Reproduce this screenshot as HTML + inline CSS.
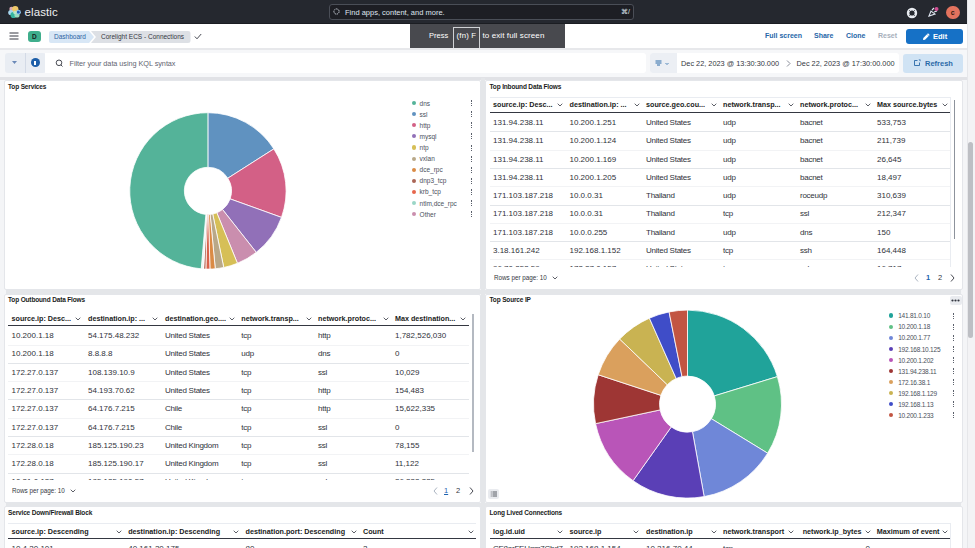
<!DOCTYPE html><html><head><meta charset="utf-8"><style>
*{margin:0;padding:0;box-sizing:border-box}
html,body{width:975px;height:548px;overflow:hidden;background:#f4f5f7;font-family:"Liberation Sans",sans-serif;color:#343741}
.a{position:absolute;white-space:nowrap}
#hdr{position:absolute;left:0;top:0;width:967px;height:24px;background:#25282f;border-bottom:1px solid #1b1d22}
#sb{position:absolute;left:966.5px;top:0;width:8.5px;height:548px;background:#f3f3f5;border-left:0.5px solid #e6e7ea}
#thumb{position:absolute;left:968.3px;top:142px;width:5px;height:195.5px;background:#bdbfc4;border-radius:2.5px}
#bc{position:absolute;left:0;top:24px;width:967px;height:24px;background:#fff}
#qb{position:absolute;left:0;top:47.5px;width:967px;height:32px;background:#f6f7f9;border-top:2px solid #e7e8eb;border-bottom:3px solid #e1e2e6}
.panel{position:absolute;background:#fff;border:1px solid #e4e6ea;border-radius:2px;overflow:hidden}
.gut{position:absolute;background:#e4e6e9}
.pt{position:absolute;left:4px;top:3px;font-size:6.5px;letter-spacing:-0.15px;font-weight:bold;color:#1a1c21}
.th{position:absolute;font-size:7.2px;font-weight:bold;color:#1a1c21}
.td{position:absolute;font-size:8px;color:#2f323a}
.leg{position:absolute;font-size:6.5px;color:#4a4f5a}
.dot{position:absolute;width:4.2px;height:4.2px;border-radius:50%}
.vd{position:absolute;width:1.2px;height:6px;border-left:1.2px dotted #5a606b}
</style></head><body><div id="sb"></div><div id="thumb"></div><div id="hdr"></div><svg class="a" style="left:7px;top:5px" width="15" height="14" viewBox="0 0 15 14"><circle cx="4.5" cy="4" r="2.2" fill="#d9a9b5"/><circle cx="8.2" cy="4.2" r="3.2" fill="#edc76a"/><circle cx="3.8" cy="7.5" r="2.6" fill="#a6d6ee"/><circle cx="6.5" cy="10" r="3.1" fill="#35b49f"/><circle cx="10" cy="10" r="2.6" fill="#9bdcc0"/><circle cx="11.5" cy="7.2" r="2.4" fill="#8ec3ee"/><circle cx="11.3" cy="7.2" r="1.4" fill="#1f5fb6"/><circle cx="8" cy="7.5" r="1.8" fill="#b8e8c8"/></svg><div class="a" style="left:24.5px;top:5.8px;font-size:11.5px;color:#f0f0f2;letter-spacing:0.1px">elastic</div><div class="a" style="left:329px;top:4px;width:305px;height:16px;border:1px solid #4a4e57;border-radius:3px;background:#1d1e24"></div><svg class="a" style="left:333px;top:8px" width="8" height="8" viewBox="0 0 8 8"><circle cx="3.5" cy="3.5" r="2.6" fill="none" stroke="#dfe5ef" stroke-width="0.9" stroke-dasharray="1.5 0.8"/></svg><div class="a" style="left:345px;top:7.5px;font-size:7.5px;color:#dfe5ef">Find apps, content, and more.</div><div class="a" style="left:621px;top:7.5px;font-size:7px;color:#dfe5ef">&#8984;/</div><svg class="a" style="left:906px;top:6.5px" width="12" height="12" viewBox="0 0 12 12"><circle cx="6" cy="6" r="3.9" fill="none" stroke="#e8ebf0" stroke-width="2.6"/><path d="M3.2,3.2L4.3,4.3M8.8,3.2L7.7,4.3M3.2,8.8L4.3,7.7M8.8,8.8L7.7,7.7" stroke="#25282f" stroke-width="0.8"/></svg><svg class="a" style="left:927px;top:6px" width="12" height="12" viewBox="0 0 12 12"><path d="M2,10 L4,5 L8,8 Z M5,4 L7,2 M7,6 L10,5" stroke="#dfe5ef" stroke-width="1.1" fill="none"/><circle cx="9.5" cy="3" r="2" fill="#d14e94"/></svg><div class="a" style="left:946px;top:5.5px;width:13.5px;height:13.5px;border-radius:50%;background:#e4735e;color:#3a1b10;font-size:7px;font-weight:bold;text-align:center;line-height:13.5px">c</div><div id="bc"></div><svg class="a" style="left:9px;top:32px" width="10" height="8" viewBox="0 0 10 8"><path d="M0.5,1H9.5M0.5,4H9.5M0.5,7H9.5" stroke="#343741" stroke-width="1"/></svg><div class="a" style="left:28px;top:30.5px;width:12.5px;height:11.5px;border-radius:3px;background:#3fae8c;color:#1a1c21;font-size:6.5px;font-weight:bold;text-align:center;line-height:11.5px">D</div><svg class="a" style="left:49px;top:30.5px" width="146" height="12" viewBox="0 0 146 12"><path d="M2,0 H40 L45,6 L40,12 H2 Q0,12 0,10 V2 Q0,0 2,0Z" fill="#d8e7f6"/><path d="M42,0 H139 Q141.5,0 141.5,2 V10 Q141.5,12 139,12 H42 L47,6Z" fill="#dde0e5"/></svg><div class="a" style="left:54px;top:33px;font-size:6.5px;color:#2c63a3">Dashboard</div><div class="a" style="left:101px;top:33px;font-size:6.5px;color:#343741">Corelight ECS - Connections</div><svg class="a" style="left:194px;top:33px" width="8" height="7" viewBox="0 0 8 7"><path d="M0.8,3.5 L3,5.8 L7.2,1" stroke="#343741" stroke-width="0.9" fill="none"/></svg><div class="a" style="left:765px;top:32px;font-size:7px;font-weight:bold;color:#2566a8">Full screen</div><div class="a" style="left:814px;top:32px;font-size:7px;font-weight:bold;color:#2566a8">Share</div><div class="a" style="left:846px;top:32px;font-size:7px;font-weight:bold;color:#2566a8">Clone</div><div class="a" style="left:878px;top:32px;font-size:7px;font-weight:bold;color:#a7afbb">Reset</div><div class="a" style="left:906px;top:28.5px;width:57px;height:15px;border-radius:3px;background:#1671c6"></div><svg class="a" style="left:921.5px;top:32px" width="9" height="9" viewBox="0 0 9 9"><path d="M1,8 L1.3,6 L6,1.3 L7.7,3 L3,7.7Z" fill="#fff"/><path d="M5,2.3 L6.7,4" stroke="#1671c6" stroke-width="0.5"/></svg><div class="a" style="left:933px;top:31.5px;font-size:7.5px;font-weight:bold;color:#fff">Edit</div><div class="a" style="left:409.5px;top:24px;width:155px;height:23.8px;background:#48494e"></div><div class="a" style="left:429px;top:31px;font-size:7.5px;color:#fff">Press</div><div class="a" style="left:453px;top:27px;width:27px;height:20.8px;border:1px solid #d0d2d5;border-bottom:none"></div><div class="a" style="left:456.5px;top:30.8px;font-size:7.8px;color:#fff;letter-spacing:0.2px">(fn) F</div><div class="a" style="left:482.5px;top:30.8px;font-size:8px;color:#fff;letter-spacing:0.1px">to exit full screen</div><div id="qb"></div><div class="a" style="left:4.5px;top:53px;width:41px;height:20px;background:#e9edf3;border-radius:3px"></div><div class="a" style="left:24.5px;top:53px;width:1px;height:20px;background:#d3dae6"></div><svg class="a" style="left:12px;top:61px" width="5" height="4" viewBox="0 0 5 4"><path d="M0,0H5L2.5,3Z" fill="#6b89b8"/></svg><div class="a" style="left:30.5px;top:58px;width:9px;height:9px;border-radius:50%;background:#1d5ea8"></div><div class="a" style="left:34.3px;top:60.5px;width:1.3px;height:4px;background:#fff"></div><div class="a" style="left:45px;top:53px;width:601px;height:20px;background:#fff;border-radius:0 3px 3px 0"></div><svg class="a" style="left:55px;top:59px" width="8" height="8" viewBox="0 0 8 8"><circle cx="4" cy="3.8" r="2.8" fill="none" stroke="#343741" stroke-width="0.9"/><path d="M5.8,5.8 L7.5,7.5" stroke="#343741" stroke-width="0.9"/></svg><div class="a" style="left:69.5px;top:59px;font-size:7.3px;letter-spacing:-0.05px;color:#5f6571">Filter your data using KQL syntax</div><div class="a" style="left:650px;top:53px;width:249px;height:20px;background:#fff;border-radius:3px"></div><div class="a" style="left:650px;top:53px;width:27px;height:20px;background:#eceff4;border-radius:3px 0 0 3px"></div><svg class="a" style="left:655px;top:59.5px" width="16" height="8" viewBox="0 0 16 8"><path d="M0.5,1H6.5M0.5,3H6.5M2,5H5" stroke="#2a6aa8" stroke-width="1"/><path d="M10.5,3L12,4.5L13.5,3" stroke="#2a6aa8" stroke-width="0.8" fill="none"/></svg><div class="a" style="left:681px;top:58.7px;font-size:7.35px;color:#343741">Dec 22, 2023 @ 13:30:30.000</div><svg class="a" style="left:786px;top:59.5px" width="5" height="7" viewBox="0 0 5 7"><path d="M1,0.5L4,3.5L1,6.5" stroke="#69707d" stroke-width="0.8" fill="none"/></svg><div class="a" style="left:796.5px;top:58.7px;font-size:7.35px;color:#343741">Dec 22, 2023 @ 17:30:00.000</div><div class="a" style="left:903px;top:53.5px;width:60px;height:19px;background:#d0e3f4;border-radius:3px"></div><svg class="a" style="left:913px;top:59px" width="8" height="8" viewBox="0 0 8 8"><path d="M6.5,3.5 V6.5 H1.5 V1.5 H4.5" stroke="#2a6aa8" stroke-width="0.9" fill="none"/><path d="M5.5,0.5 L7.5,0.5 L7.5,2.5Z" fill="#2a6aa8"/></svg><div class="a" style="left:925px;top:58.5px;font-size:7.5px;font-weight:bold;color:#2a6aa8">Refresh</div><div class="gut" style="left:481px;top:78px;width:4px;height:470px"></div><div class="gut" style="left:6px;top:290px;width:955px;height:4px"></div><div class="gut" style="left:6px;top:502.5px;width:955px;height:4px"></div><div class="panel" style="left:4px;top:80px;width:477px;height:210px"></div><div class="panel" style="left:485px;top:80px;width:478px;height:210px"></div><div class="panel" style="left:4px;top:294px;width:477px;height:209px"></div><div class="panel" style="left:485px;top:294px;width:478px;height:209px"></div><div class="panel" style="left:4px;top:506px;width:477px;height:60px"></div><div class="panel" style="left:485px;top:506px;width:478px;height:60px"></div><div class="a pt" style="left:8px;top:82.8px">Top Services</div><div class="a pt" style="left:489.5px;top:82.8px">Top Inbound Data Flows</div><div class="a pt" style="left:8px;top:296.3px">Top Outbound Data Flows</div><div class="a pt" style="left:489.5px;top:296.3px">Top Source IP</div><div class="a pt" style="left:8px;top:509px">Service Down/Firewall Block</div><div class="a pt" style="left:489.5px;top:509px">Long Lived Connections</div><div class="a" style="left:490px;top:96.5px;width:460.5px;height:1px;background:#e9ecf1"></div><div class="a th" style="left:493px;top:100px">source.ip: Desc...</div><div class="a th" style="left:569.5px;top:100px">destination.ip: ...</div><div class="a th" style="left:646px;top:100px">source.geo.cou...</div><div class="a th" style="left:723px;top:100px">network.transp...</div><div class="a th" style="left:800px;top:100px">network.protoc...</div><div class="a th" style="left:877px;top:100px">Max source.bytes</div><svg class="a" style="left:557px;top:103px" width="6" height="4" viewBox="0 0 6 4"><path d="M0.7,0.7L3,3L5.3,0.7" stroke="#343741" stroke-width="0.8" fill="none"/></svg><svg class="a" style="left:634px;top:103px" width="6" height="4" viewBox="0 0 6 4"><path d="M0.7,0.7L3,3L5.3,0.7" stroke="#343741" stroke-width="0.8" fill="none"/></svg><svg class="a" style="left:711px;top:103px" width="6" height="4" viewBox="0 0 6 4"><path d="M0.7,0.7L3,3L5.3,0.7" stroke="#343741" stroke-width="0.8" fill="none"/></svg><svg class="a" style="left:788px;top:103px" width="6" height="4" viewBox="0 0 6 4"><path d="M0.7,0.7L3,3L5.3,0.7" stroke="#343741" stroke-width="0.8" fill="none"/></svg><svg class="a" style="left:865px;top:103px" width="6" height="4" viewBox="0 0 6 4"><path d="M0.7,0.7L3,3L5.3,0.7" stroke="#343741" stroke-width="0.8" fill="none"/></svg><svg class="a" style="left:942px;top:103px" width="6" height="4" viewBox="0 0 6 4"><path d="M0.7,0.7L3,3L5.3,0.7" stroke="#343741" stroke-width="0.8" fill="none"/></svg><div class="a" style="left:490px;top:111.5px;width:460.5px;height:1.5px;background:#343741"></div><div class="a" style="left:490px;top:113.0px;width:460.5px;height:153.5px;overflow:hidden"><div class="a td" style="left:3px;top:4.9px">131.94.238.11</div><div class="a td" style="left:79.5px;top:4.9px">10.200.1.251</div><div class="a td" style="left:156px;top:4.9px;letter-spacing:-0.25px">United States</div><div class="a td" style="left:233px;top:4.9px;letter-spacing:-0.25px">udp</div><div class="a td" style="left:310px;top:4.9px;letter-spacing:-0.25px">bacnet</div><div class="a td" style="left:387px;top:4.9px">533,753</div><div class="a" style="left:0;top:18.3px;width:460.5px;height:1px;background:#e2e5e9"></div><div class="a td" style="left:3px;top:23.2px">131.94.238.11</div><div class="a td" style="left:79.5px;top:23.2px">10.200.1.124</div><div class="a td" style="left:156px;top:23.2px;letter-spacing:-0.25px">United States</div><div class="a td" style="left:233px;top:23.2px;letter-spacing:-0.25px">udp</div><div class="a td" style="left:310px;top:23.2px;letter-spacing:-0.25px">bacnet</div><div class="a td" style="left:387px;top:23.2px">211,739</div><div class="a" style="left:0;top:36.6px;width:460.5px;height:1px;background:#f2f3f5"></div><div class="a td" style="left:3px;top:41.5px">131.94.238.11</div><div class="a td" style="left:79.5px;top:41.5px">10.200.1.169</div><div class="a td" style="left:156px;top:41.5px;letter-spacing:-0.25px">United States</div><div class="a td" style="left:233px;top:41.5px;letter-spacing:-0.25px">udp</div><div class="a td" style="left:310px;top:41.5px;letter-spacing:-0.25px">bacnet</div><div class="a td" style="left:387px;top:41.5px">26,645</div><div class="a" style="left:0;top:54.9px;width:460.5px;height:1px;background:#e2e5e9"></div><div class="a td" style="left:3px;top:59.7px">131.94.238.11</div><div class="a td" style="left:79.5px;top:59.7px">10.200.1.205</div><div class="a td" style="left:156px;top:59.7px;letter-spacing:-0.25px">United States</div><div class="a td" style="left:233px;top:59.7px;letter-spacing:-0.25px">udp</div><div class="a td" style="left:310px;top:59.7px;letter-spacing:-0.25px">bacnet</div><div class="a td" style="left:387px;top:59.7px">18,497</div><div class="a" style="left:0;top:73.2px;width:460.5px;height:1px;background:#f2f3f5"></div><div class="a td" style="left:3px;top:78.0px">171.103.187.218</div><div class="a td" style="left:79.5px;top:78.0px">10.0.0.31</div><div class="a td" style="left:156px;top:78.0px;letter-spacing:-0.25px">Thailand</div><div class="a td" style="left:233px;top:78.0px;letter-spacing:-0.25px">udp</div><div class="a td" style="left:310px;top:78.0px;letter-spacing:-0.25px">roceudp</div><div class="a td" style="left:387px;top:78.0px">310,639</div><div class="a" style="left:0;top:91.5px;width:460.5px;height:1px;background:#e2e5e9"></div><div class="a td" style="left:3px;top:96.3px">171.103.187.218</div><div class="a td" style="left:79.5px;top:96.3px">10.0.0.31</div><div class="a td" style="left:156px;top:96.3px;letter-spacing:-0.25px">Thailand</div><div class="a td" style="left:233px;top:96.3px;letter-spacing:-0.25px">tcp</div><div class="a td" style="left:310px;top:96.3px;letter-spacing:-0.25px">ssl</div><div class="a td" style="left:387px;top:96.3px">212,347</div><div class="a" style="left:0;top:109.7px;width:460.5px;height:1px;background:#f2f3f5"></div><div class="a td" style="left:3px;top:114.6px">171.103.187.218</div><div class="a td" style="left:79.5px;top:114.6px">10.0.0.255</div><div class="a td" style="left:156px;top:114.6px;letter-spacing:-0.25px">Thailand</div><div class="a td" style="left:233px;top:114.6px;letter-spacing:-0.25px">udp</div><div class="a td" style="left:310px;top:114.6px;letter-spacing:-0.25px">dns</div><div class="a td" style="left:387px;top:114.6px">150</div><div class="a" style="left:0;top:128.0px;width:460.5px;height:1px;background:#e2e5e9"></div><div class="a td" style="left:3px;top:132.9px">3.18.161.242</div><div class="a td" style="left:79.5px;top:132.9px">192.168.1.152</div><div class="a td" style="left:156px;top:132.9px;letter-spacing:-0.25px">United States</div><div class="a td" style="left:233px;top:132.9px;letter-spacing:-0.25px">tcp</div><div class="a td" style="left:310px;top:132.9px;letter-spacing:-0.25px">ssh</div><div class="a td" style="left:387px;top:132.9px">164,448</div><div class="a" style="left:0;top:146.3px;width:460.5px;height:1px;background:#f2f3f5"></div><div class="a td" style="left:3px;top:151.1px">96.70.253.59</div><div class="a td" style="left:79.5px;top:151.1px">172.27.0.157</div><div class="a td" style="left:156px;top:151.1px;letter-spacing:-0.25px">United States</div><div class="a td" style="left:233px;top:151.1px;letter-spacing:-0.25px">tcp</div><div class="a td" style="left:310px;top:151.1px;letter-spacing:-0.25px">ssl</div><div class="a td" style="left:387px;top:151.1px">16,717</div><div class="a" style="left:0;top:164.6px;width:460.5px;height:1px;background:#e2e5e9"></div></div><div class="a" style="left:950px;top:96.5px;width:1px;height:170px;background:#e9ecf1"></div><div class="a" style="left:953.6px;top:99.5px;width:1.3px;height:139px;background:#8d939c"></div><div class="a" style="left:494px;top:274px;font-size:6.3px;color:#343741">Rows per page: 10</div><svg class="a" style="left:551.5px;top:276px" width="6" height="4" viewBox="0 0 6 4"><path d="M0.7,0.7L3,3L5.3,0.7" stroke="#343741" stroke-width="0.8" fill="none"/></svg><svg class="a" style="left:914px;top:273.5px" width="5" height="8" viewBox="0 0 5 8"><path d="M4,0.5L1,4L4,7.5" stroke="#a2abba" stroke-width="0.9" fill="none"/></svg><div class="a" style="left:926px;top:273px;font-size:7.5px;font-weight:bold;color:#1f63b0">1</div><div class="a" style="left:938px;top:273px;font-size:7.5px;color:#343741">2</div><svg class="a" style="left:950px;top:273.5px" width="5" height="8" viewBox="0 0 5 8"><path d="M1,0.5L4,4L1,7.5" stroke="#343741" stroke-width="0.9" fill="none"/></svg><div class="a th" style="left:11.5px;top:313.8px">source.ip: Desc...</div><div class="a th" style="left:88px;top:313.8px">destination.ip: ...</div><div class="a th" style="left:165px;top:313.8px">destination.geo....</div><div class="a th" style="left:241.3px;top:313.8px">network.transp...</div><div class="a th" style="left:318px;top:313.8px">network.protoc...</div><div class="a th" style="left:395px;top:313.8px">Max destination...</div><svg class="a" style="left:75px;top:316.8px" width="6" height="4" viewBox="0 0 6 4"><path d="M0.7,0.7L3,3L5.3,0.7" stroke="#343741" stroke-width="0.8" fill="none"/></svg><svg class="a" style="left:152px;top:316.8px" width="6" height="4" viewBox="0 0 6 4"><path d="M0.7,0.7L3,3L5.3,0.7" stroke="#343741" stroke-width="0.8" fill="none"/></svg><svg class="a" style="left:229px;top:316.8px" width="6" height="4" viewBox="0 0 6 4"><path d="M0.7,0.7L3,3L5.3,0.7" stroke="#343741" stroke-width="0.8" fill="none"/></svg><svg class="a" style="left:305.7px;top:316.8px" width="6" height="4" viewBox="0 0 6 4"><path d="M0.7,0.7L3,3L5.3,0.7" stroke="#343741" stroke-width="0.8" fill="none"/></svg><svg class="a" style="left:382.6px;top:316.8px" width="6" height="4" viewBox="0 0 6 4"><path d="M0.7,0.7L3,3L5.3,0.7" stroke="#343741" stroke-width="0.8" fill="none"/></svg><svg class="a" style="left:460px;top:316.8px" width="6" height="4" viewBox="0 0 6 4"><path d="M0.7,0.7L3,3L5.3,0.7" stroke="#343741" stroke-width="0.8" fill="none"/></svg><div class="a" style="left:8px;top:324.8px;width:461px;height:1.5px;background:#343741"></div><div class="a" style="left:8px;top:326.3px;width:461px;height:153.39999999999998px;overflow:hidden"><div class="a td" style="left:3.5px;top:4.9px">10.200.1.18</div><div class="a td" style="left:80px;top:4.9px">54.175.48.232</div><div class="a td" style="left:157px;top:4.9px;letter-spacing:-0.25px">United States</div><div class="a td" style="left:233.3px;top:4.9px;letter-spacing:-0.25px">tcp</div><div class="a td" style="left:310px;top:4.9px;letter-spacing:-0.25px">http</div><div class="a td" style="left:387px;top:4.9px">1,782,526,030</div><div class="a" style="left:0;top:18.3px;width:461px;height:1px;background:#f2f3f5"></div><div class="a td" style="left:3.5px;top:23.2px">10.200.1.18</div><div class="a td" style="left:80px;top:23.2px">8.8.8.8</div><div class="a td" style="left:157px;top:23.2px;letter-spacing:-0.25px">United States</div><div class="a td" style="left:233.3px;top:23.2px;letter-spacing:-0.25px">udp</div><div class="a td" style="left:310px;top:23.2px;letter-spacing:-0.25px">dns</div><div class="a td" style="left:387px;top:23.2px">0</div><div class="a" style="left:0;top:36.6px;width:461px;height:1px;background:#e2e5e9"></div><div class="a td" style="left:3.5px;top:41.5px">172.27.0.137</div><div class="a td" style="left:80px;top:41.5px">108.139.10.9</div><div class="a td" style="left:157px;top:41.5px;letter-spacing:-0.25px">United States</div><div class="a td" style="left:233.3px;top:41.5px;letter-spacing:-0.25px">tcp</div><div class="a td" style="left:310px;top:41.5px;letter-spacing:-0.25px">ssl</div><div class="a td" style="left:387px;top:41.5px">10,029</div><div class="a" style="left:0;top:54.9px;width:461px;height:1px;background:#f2f3f5"></div><div class="a td" style="left:3.5px;top:59.7px">172.27.0.137</div><div class="a td" style="left:80px;top:59.7px">54.193.70.62</div><div class="a td" style="left:157px;top:59.7px;letter-spacing:-0.25px">United States</div><div class="a td" style="left:233.3px;top:59.7px;letter-spacing:-0.25px">tcp</div><div class="a td" style="left:310px;top:59.7px;letter-spacing:-0.25px">http</div><div class="a td" style="left:387px;top:59.7px">154,483</div><div class="a" style="left:0;top:73.2px;width:461px;height:1px;background:#e2e5e9"></div><div class="a td" style="left:3.5px;top:78.0px">172.27.0.137</div><div class="a td" style="left:80px;top:78.0px">64.176.7.215</div><div class="a td" style="left:157px;top:78.0px;letter-spacing:-0.25px">Chile</div><div class="a td" style="left:233.3px;top:78.0px;letter-spacing:-0.25px">tcp</div><div class="a td" style="left:310px;top:78.0px;letter-spacing:-0.25px">http</div><div class="a td" style="left:387px;top:78.0px">15,622,335</div><div class="a" style="left:0;top:91.5px;width:461px;height:1px;background:#f2f3f5"></div><div class="a td" style="left:3.5px;top:96.3px">172.27.0.137</div><div class="a td" style="left:80px;top:96.3px">64.176.7.215</div><div class="a td" style="left:157px;top:96.3px;letter-spacing:-0.25px">Chile</div><div class="a td" style="left:233.3px;top:96.3px;letter-spacing:-0.25px">tcp</div><div class="a td" style="left:310px;top:96.3px;letter-spacing:-0.25px">ssl</div><div class="a td" style="left:387px;top:96.3px">0</div><div class="a" style="left:0;top:109.7px;width:461px;height:1px;background:#e2e5e9"></div><div class="a td" style="left:3.5px;top:114.6px">172.28.0.18</div><div class="a td" style="left:80px;top:114.6px">185.125.190.23</div><div class="a td" style="left:157px;top:114.6px;letter-spacing:-0.25px">United Kingdom</div><div class="a td" style="left:233.3px;top:114.6px;letter-spacing:-0.25px">tcp</div><div class="a td" style="left:310px;top:114.6px;letter-spacing:-0.25px">ssl</div><div class="a td" style="left:387px;top:114.6px">78,155</div><div class="a" style="left:0;top:128.0px;width:461px;height:1px;background:#f2f3f5"></div><div class="a td" style="left:3.5px;top:132.9px">172.28.0.18</div><div class="a td" style="left:80px;top:132.9px">185.125.190.17</div><div class="a td" style="left:157px;top:132.9px;letter-spacing:-0.25px">United Kingdom</div><div class="a td" style="left:233.3px;top:132.9px;letter-spacing:-0.25px">tcp</div><div class="a td" style="left:310px;top:132.9px;letter-spacing:-0.25px">ssl</div><div class="a td" style="left:387px;top:132.9px">11,122</div><div class="a" style="left:0;top:146.3px;width:461px;height:1px;background:#e2e5e9"></div><div class="a td" style="left:3.5px;top:151.1px">10.21.0.137</div><div class="a td" style="left:80px;top:151.1px">185.125.190.57</div><div class="a td" style="left:157px;top:151.1px;letter-spacing:-0.25px">United Kingdom</div><div class="a td" style="left:233.3px;top:151.1px;letter-spacing:-0.25px">tcp</div><div class="a td" style="left:310px;top:151.1px;letter-spacing:-0.25px">ssl</div><div class="a td" style="left:387px;top:151.1px">36,332,335</div><div class="a" style="left:0;top:164.6px;width:461px;height:1px;background:#f2f3f5"></div></div><div class="a" style="left:472.4px;top:313.7px;width:2px;height:138px;background:#b4b9c1"></div><div class="a" style="left:12px;top:487px;font-size:6.3px;color:#343741">Rows per page: 10</div><svg class="a" style="left:70px;top:489px" width="6" height="4" viewBox="0 0 6 4"><path d="M0.7,0.7L3,3L5.3,0.7" stroke="#343741" stroke-width="0.8" fill="none"/></svg><svg class="a" style="left:433px;top:486.5px" width="5" height="8" viewBox="0 0 5 8"><path d="M4,0.5L1,4L4,7.5" stroke="#a2abba" stroke-width="0.9" fill="none"/></svg><div class="a" style="left:444px;top:486px;font-size:7.5px;color:#1f63b0;text-decoration:underline">1</div><div class="a" style="left:456px;top:486px;font-size:7.5px;color:#343741">2</div><svg class="a" style="left:469px;top:486.5px" width="5" height="8" viewBox="0 0 5 8"><path d="M1,0.5L4,4L1,7.5" stroke="#343741" stroke-width="0.9" fill="none"/></svg><div class="a" style="left:8px;top:523px;width:468px;height:1px;background:#e9ecf1"></div><div class="a th" style="left:11.5px;top:527px">source.ip: Descending</div><div class="a th" style="left:128.2px;top:527px">destination.ip: Descending</div><div class="a th" style="left:245.6px;top:527px">destination.port: Descending</div><div class="a th" style="left:363px;top:527px">Count</div><svg class="a" style="left:116px;top:530px" width="6" height="4" viewBox="0 0 6 4"><path d="M0.7,0.7L3,3L5.3,0.7" stroke="#343741" stroke-width="0.8" fill="none"/></svg><svg class="a" style="left:233px;top:530px" width="6" height="4" viewBox="0 0 6 4"><path d="M0.7,0.7L3,3L5.3,0.7" stroke="#343741" stroke-width="0.8" fill="none"/></svg><svg class="a" style="left:350.6px;top:530px" width="6" height="4" viewBox="0 0 6 4"><path d="M0.7,0.7L3,3L5.3,0.7" stroke="#343741" stroke-width="0.8" fill="none"/></svg><svg class="a" style="left:467.8px;top:530px" width="6" height="4" viewBox="0 0 6 4"><path d="M0.7,0.7L3,3L5.3,0.7" stroke="#343741" stroke-width="0.8" fill="none"/></svg><div class="a" style="left:8px;top:537.5px;width:468px;height:1.5px;background:#343741"></div><div class="a" style="left:8px;top:539.0px;width:468px;height:21.0px;overflow:hidden"><div class="a td" style="left:3.5px;top:5.2px">10.4.20.101</div><div class="a td" style="left:120.19999999999999px;top:5.2px">40.161.20.175</div><div class="a td" style="left:237.6px;top:5.2px">80</div><div class="a td" style="left:355px;top:5.2px">2</div></div><div class="a" style="left:490px;top:523px;width:460.5px;height:1px;background:#e9ecf1"></div><div class="a th" style="left:493px;top:527px">log.id.uid</div><div class="a th" style="left:569.5px;top:527px">source.ip</div><div class="a th" style="left:646px;top:527px">destination.ip</div><div class="a th" style="left:723px;top:527px">network.transport</div><div class="a th" style="left:802.7px;top:527px">network.ip_bytes</div><div class="a th" style="left:876.8px;top:527px">Maximum of event</div><svg class="a" style="left:557px;top:530px" width="6" height="4" viewBox="0 0 6 4"><path d="M0.7,0.7L3,3L5.3,0.7" stroke="#343741" stroke-width="0.8" fill="none"/></svg><svg class="a" style="left:633.4px;top:530px" width="6" height="4" viewBox="0 0 6 4"><path d="M0.7,0.7L3,3L5.3,0.7" stroke="#343741" stroke-width="0.8" fill="none"/></svg><svg class="a" style="left:710.8px;top:530px" width="6" height="4" viewBox="0 0 6 4"><path d="M0.7,0.7L3,3L5.3,0.7" stroke="#343741" stroke-width="0.8" fill="none"/></svg><svg class="a" style="left:788px;top:530px" width="6" height="4" viewBox="0 0 6 4"><path d="M0.7,0.7L3,3L5.3,0.7" stroke="#343741" stroke-width="0.8" fill="none"/></svg><svg class="a" style="left:865px;top:530px" width="6" height="4" viewBox="0 0 6 4"><path d="M0.7,0.7L3,3L5.3,0.7" stroke="#343741" stroke-width="0.8" fill="none"/></svg><svg class="a" style="left:942px;top:530px" width="6" height="4" viewBox="0 0 6 4"><path d="M0.7,0.7L3,3L5.3,0.7" stroke="#343741" stroke-width="0.8" fill="none"/></svg><div class="a" style="left:490px;top:537.5px;width:460.5px;height:1.5px;background:#343741"></div><div class="a" style="left:490px;top:539.0px;width:460.5px;height:21.0px;overflow:hidden"><div class="a td" style="left:3px;top:5.2px;letter-spacing:-0.25px">CE8arFEHqm7Chd7</div><div class="a td" style="left:79.5px;top:5.2px">192.168.1.154</div><div class="a td" style="left:156px;top:5.2px">10.216.70.44</div><div class="a td" style="left:233px;top:5.2px;letter-spacing:-0.25px">tcp</div><div class="a td" style="left:312.70000000000005px;top:5.2px"></div><div class="a td" style="left:386.79999999999995px;top:5.2px"></div></div><div class="a td" style="left:865.5px;top:544.2px">0</div><div class="a" style="left:950px;top:523px;width:1px;height:30px;background:#e9ecf1"></div><svg class="a" style="left:0;top:0" width="975" height="548"><path d="M207.90,112.70A78.2,78.2 0 0 1 273.85,148.88L227.80,178.22A23.6,23.6 0 0 0 207.90,167.30Z" fill="#6092c0" stroke="#fff" stroke-width="0.8"/><path d="M273.85,148.88A78.2,78.2 0 0 1 281.48,217.39L230.10,198.89A23.6,23.6 0 0 0 227.80,178.22Z" fill="#d36086" stroke="#fff" stroke-width="0.8"/><path d="M281.48,217.39A78.2,78.2 0 0 1 256.26,252.35L222.49,209.45A23.6,23.6 0 0 0 230.10,198.89Z" fill="#9170b8" stroke="#fff" stroke-width="0.8"/><path d="M256.26,252.35A78.2,78.2 0 0 1 237.45,263.30L216.82,212.75A23.6,23.6 0 0 0 222.49,209.45Z" fill="#ca8eae" stroke="#fff" stroke-width="0.8"/><path d="M237.45,263.30A78.2,78.2 0 0 1 223.76,267.48L212.69,214.01A23.6,23.6 0 0 0 216.82,212.75Z" fill="#d6bf57" stroke="#fff" stroke-width="0.8"/><path d="M223.76,267.48A78.2,78.2 0 0 1 215.26,268.75L210.12,214.40A23.6,23.6 0 0 0 212.69,214.01Z" fill="#b9a888" stroke="#fff" stroke-width="0.8"/><path d="M215.26,268.75A78.2,78.2 0 0 1 209.95,269.07L208.52,214.49A23.6,23.6 0 0 0 210.12,214.40Z" fill="#da8b45" stroke="#fff" stroke-width="0.8"/><path d="M209.95,269.07A78.2,78.2 0 0 1 205.85,269.07L207.28,214.49A23.6,23.6 0 0 0 208.52,214.49Z" fill="#d9614a" stroke="#fff" stroke-width="0.8"/><path d="M205.85,269.07A78.2,78.2 0 0 1 203.53,268.98L206.58,214.46A23.6,23.6 0 0 0 207.28,214.49Z" fill="#b5604f" stroke="#fff" stroke-width="0.8"/><path d="M203.53,268.98A78.2,78.2 0 0 1 201.22,268.81L205.88,214.41A23.6,23.6 0 0 0 206.58,214.46Z" fill="#eef4f2" stroke="#fff" stroke-width="0.8"/><path d="M201.22,268.81A78.2,78.2 0 0 1 207.90,112.70L207.90,167.30A23.6,23.6 0 0 0 205.88,214.41Z" fill="#54b399" stroke="#fff" stroke-width="0.8"/></svg><div class="dot" style="left:411.79999999999995px;top:101.0px;background:#54b399"></div><div class="a leg" style="left:419.6px;top:99.6px">dns</div><div class="vd" style="left:471px;top:100.1px"></div><div class="dot" style="left:411.79999999999995px;top:112.1px;background:#6092c0"></div><div class="a leg" style="left:419.6px;top:110.7px">ssl</div><div class="vd" style="left:471px;top:111.2px"></div><div class="dot" style="left:411.79999999999995px;top:123.2px;background:#d36086"></div><div class="a leg" style="left:419.6px;top:121.8px">http</div><div class="vd" style="left:471px;top:122.3px"></div><div class="dot" style="left:411.79999999999995px;top:134.3px;background:#9170b8"></div><div class="a leg" style="left:419.6px;top:132.9px">mysql</div><div class="vd" style="left:471px;top:133.4px"></div><div class="dot" style="left:411.79999999999995px;top:145.4px;background:#d6bf57"></div><div class="a leg" style="left:419.6px;top:144.0px">ntp</div><div class="vd" style="left:471px;top:144.5px"></div><div class="dot" style="left:411.79999999999995px;top:156.5px;background:#b9a888"></div><div class="a leg" style="left:419.6px;top:155.1px">vxlan</div><div class="vd" style="left:471px;top:155.6px"></div><div class="dot" style="left:411.79999999999995px;top:167.6px;background:#da8b45"></div><div class="a leg" style="left:419.6px;top:166.2px">dce_rpc</div><div class="vd" style="left:471px;top:166.7px"></div><div class="dot" style="left:411.79999999999995px;top:178.7px;background:#aa6556"></div><div class="a leg" style="left:419.6px;top:177.3px">dnp3_tcp</div><div class="vd" style="left:471px;top:177.8px"></div><div class="dot" style="left:411.79999999999995px;top:189.8px;background:#e7664c"></div><div class="a leg" style="left:419.6px;top:188.4px">krb_tcp</div><div class="vd" style="left:471px;top:188.9px"></div><div class="dot" style="left:411.79999999999995px;top:200.9px;background:#9ad6c7"></div><div class="a leg" style="left:419.6px;top:199.5px">ntlm,dce_rpc</div><div class="vd" style="left:471px;top:200.0px"></div><div class="dot" style="left:411.79999999999995px;top:212.0px;background:#ca8eae"></div><div class="a leg" style="left:419.6px;top:210.6px">Other</div><div class="vd" style="left:471px;top:211.1px"></div><svg class="a" style="left:0;top:0" width="975" height="548"><path d="M687.50,310.10A94,94 0 0 1 777.39,376.62L714.28,395.91A28,28 0 0 0 687.50,376.10Z" fill="#20a39a" stroke="#fff" stroke-width="0.8"/><path d="M777.39,376.62A94,94 0 0 1 767.65,453.21L711.37,418.73A28,28 0 0 0 714.28,395.91Z" fill="#5fc185" stroke="#fff" stroke-width="0.8"/><path d="M767.65,453.21A94,94 0 0 1 704.15,496.61L692.46,431.66A28,28 0 0 0 711.37,418.73Z" fill="#6f87d8" stroke="#fff" stroke-width="0.8"/><path d="M704.15,496.61A94,94 0 0 1 633.05,480.72L671.28,426.92A28,28 0 0 0 692.46,431.66Z" fill="#5a3fb6" stroke="#fff" stroke-width="0.8"/><path d="M633.05,480.72A94,94 0 0 1 595.55,423.64L660.11,409.92A28,28 0 0 0 671.28,426.92Z" fill="#b955b8" stroke="#fff" stroke-width="0.8"/><path d="M595.55,423.64A94,94 0 0 1 598.20,374.74L660.90,395.35A28,28 0 0 0 660.11,409.92Z" fill="#9e3634" stroke="#fff" stroke-width="0.8"/><path d="M598.20,374.74A94,94 0 0 1 619.65,339.04L667.29,384.72A28,28 0 0 0 660.90,395.35Z" fill="#daa05d" stroke="#fff" stroke-width="0.8"/><path d="M619.65,339.04A94,94 0 0 1 649.42,318.16L676.16,378.50A28,28 0 0 0 667.29,384.72Z" fill="#c9b352" stroke="#fff" stroke-width="0.8"/><path d="M649.42,318.16A94,94 0 0 1 669.08,311.92L682.01,376.64A28,28 0 0 0 676.16,378.50Z" fill="#3f4dc8" stroke="#fff" stroke-width="0.8"/><path d="M669.08,311.92A94,94 0 0 1 687.50,310.10L687.50,376.10A28,28 0 0 0 682.01,376.64Z" fill="#c25542" stroke="#fff" stroke-width="0.8"/></svg><div class="dot" style="left:889.1999999999999px;top:313.4px;background:#20a39a"></div><div class="a leg" style="left:898.2px;top:312.2px;letter-spacing:-0.22px">141.81.0.10</div><div class="vd" style="left:953.3px;top:312.5px"></div><div class="dot" style="left:889.1999999999999px;top:324.5px;background:#5fc185"></div><div class="a leg" style="left:898.2px;top:323.3px;letter-spacing:-0.22px">10.200.1.18</div><div class="vd" style="left:953.3px;top:323.6px"></div><div class="dot" style="left:889.1999999999999px;top:335.6px;background:#6f87d8"></div><div class="a leg" style="left:898.2px;top:334.4px;letter-spacing:-0.22px">10.200.1.77</div><div class="vd" style="left:953.3px;top:334.7px"></div><div class="dot" style="left:889.1999999999999px;top:346.7px;background:#5a3fb6"></div><div class="a leg" style="left:898.2px;top:345.5px;letter-spacing:-0.22px">192.168.10.125</div><div class="vd" style="left:953.3px;top:345.8px"></div><div class="dot" style="left:889.1999999999999px;top:357.8px;background:#b955b8"></div><div class="a leg" style="left:898.2px;top:356.6px;letter-spacing:-0.22px">10.200.1.202</div><div class="vd" style="left:953.3px;top:356.9px"></div><div class="dot" style="left:889.1999999999999px;top:368.9px;background:#9e3634"></div><div class="a leg" style="left:898.2px;top:367.7px;letter-spacing:-0.22px">131.94.238.11</div><div class="vd" style="left:953.3px;top:368.0px"></div><div class="dot" style="left:889.1999999999999px;top:380.0px;background:#daa05d"></div><div class="a leg" style="left:898.2px;top:378.8px;letter-spacing:-0.22px">172.16.38.1</div><div class="vd" style="left:953.3px;top:379.1px"></div><div class="dot" style="left:889.1999999999999px;top:391.1px;background:#c9b352"></div><div class="a leg" style="left:898.2px;top:389.9px;letter-spacing:-0.22px">192.168.1.129</div><div class="vd" style="left:953.3px;top:390.2px"></div><div class="dot" style="left:889.1999999999999px;top:402.2px;background:#3f4dc8"></div><div class="a leg" style="left:898.2px;top:401.0px;letter-spacing:-0.22px">192.168.1.13</div><div class="vd" style="left:953.3px;top:401.3px"></div><div class="dot" style="left:889.1999999999999px;top:413.3px;background:#c25542"></div><div class="a leg" style="left:898.2px;top:412.1px;letter-spacing:-0.22px">10.200.1.233</div><div class="vd" style="left:953.3px;top:412.4px"></div><div class="a" style="left:950px;top:296px;width:11.5px;height:9px;background:#e9ebef;border-radius:2px"></div><svg class="a" style="left:951.3px;top:299px" width="9" height="3" viewBox="0 0 9 3"><circle cx="1.5" cy="1.5" r="1.1" fill="#343741"/><circle cx="4.5" cy="1.5" r="1.1" fill="#343741"/><circle cx="7.5" cy="1.5" r="1.1" fill="#343741"/></svg><div class="a" style="left:488px;top:489px;width:11px;height:10px;background:#e9ebef;border-radius:2px"></div><svg class="a" style="left:489.5px;top:490px" width="8" height="8" viewBox="0 0 8 8"><path d="M2.5,2H7M2.5,4H7M2.5,6H7M0.8,2H1.6M0.8,4H1.6M0.8,6H1.6" stroke="#343741" stroke-width="0.8"/></svg></body></html>
